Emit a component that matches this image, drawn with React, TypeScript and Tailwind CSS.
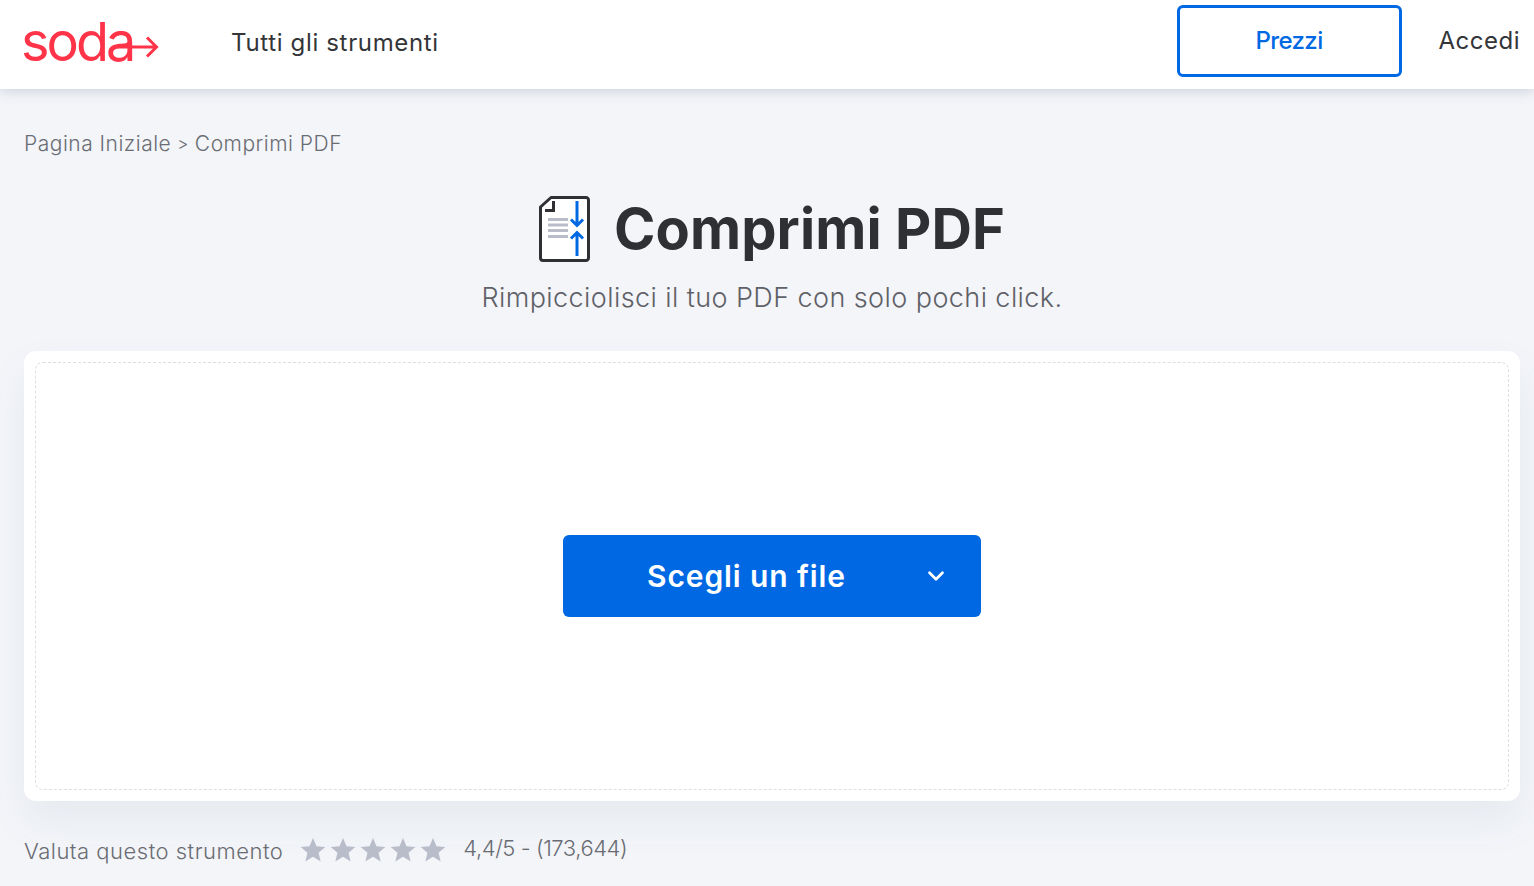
import React from 'react';
import { ChevronDown } from 'lucide-react';

const font = { fontFamily: 'Inter, "Noto Sans", sans-serif' };

const Star = () => (
  <svg viewBox="0 0 24 24" className="h-[26px] w-[26px] fill-[#b9bdc9]">
    <path d="M12 1l3.2 7.6 8.2.6-6.3 5.3 2 8L12 18.2 4.9 22.500l2-8L.6 9.200l8.200-.6z" />
  </svg>
);

const PdfIcon = () => (
  <svg width="52" height="68" viewBox="0 0 52 68" fill="none">
    <path d="M12 2.500h35a2.500 2.500 0 0 1 2.500 2.500v58a2.500 2.500 0 0 1-2.500 2.500H4a2.500 2.500 0 0 1-2.500-2.500V12z" fill="#fff" stroke="#2f3033" strokeWidth="3" strokeLinejoin="round" />
    <path d="M14.500 6v9.500H6" stroke="#2f3033" strokeWidth="3" />
    <path d="M9 23h20v3H9zM9 28.500h20v3H9zM9 34h20v3H9zM9 40h20v3H9z" fill="#b9bdc9" />
    <path d="M38 6v25M32 24.500l6 6 6-6M38 61V37M32 43.500l6-6 6 6" stroke="#0068e3" strokeWidth="3" />
  </svg>
);

export default function App() {
  return (
    <div style={font} className="relative h-[886px] overflow-hidden bg-[#f3f5f9]">
      <header className="flex h-[89px] items-center justify-between bg-white pl-6 pr-[14px] shadow-[0_2px_12px_rgba(90,100,130,0.25)]">
        <div className="flex items-center">
          <div className="relative flex h-[60px] w-[136px] items-center pb-[6px]">
            <span className="-ml-[3px] text-[54px] font-normal leading-none tracking-[-3px] text-[#ff3448]">soda</span>
            <svg className="absolute left-[93px] top-[20px]" width="42" height="24" viewBox="0 0 42 24" fill="none">
              <path d="M0 12h39M30 2.500l9.500 9.500-9.500 9.500" stroke="#ff3448" strokeWidth="3" />
            </svg>
          </div>
          <span className="ml-[71px] pb-[3px] text-[24px] text-[#333538] tracking-[0.660px]">Tutti gli strumenti</span>
        </div>
        <div className="flex items-center pb-[7px]">
          <button className="h-[72px] w-[225px] rounded-md border-[3px] border-[#0068e3] text-[24px] font-medium tracking-[-0.600px] text-[#0068e3]">
            Prezzi
          </button>
          <span className="ml-[37px] text-[24px] text-[#333538] tracking-[0.500px]">Accedi</span>
        </div>
      </header>

      <main className="pl-6 pr-[14px]">
        <nav className="mt-[40px] flex items-center text-[21px] font-light leading-[30px] tracking-[0.500px] text-[#6a6c73]">
          <span>Pagina Iniziale</span>
          <span className="mx-[6px] text-[17px]">&gt;</span>
          <span>Comprimi PDF</span>
        </nav>

        <div className="mt-[36px] flex items-center justify-center">
          <PdfIcon />
          <h1 className="ml-[23px] text-[56px] font-bold leading-[68px] tracking-[0.100px] text-[#2f3033]">Comprimi PDF</h1>
        </div>
        <p className="mt-[15px] text-center text-[27px] leading-[40px] font-light tracking-[0.420px] text-[#5f6167]">
          Rimpicciolisci il tuo PDF con solo pochi click.
        </p>

        <section className="mt-[33px] h-[450px] rounded-xl bg-white p-[11px] shadow-[0_20px_40px_rgba(90,100,130,0.08)]">
          <div className="flex h-full items-center justify-center rounded-lg border border-dashed border-[#dcdee3]">
            <button className="relative flex h-[82px] w-[418px] items-center rounded-md bg-[#0068e3] pl-[84px] text-[30px] font-semibold tracking-[0.900px] text-white">
              Scegli un file
              <ChevronDown className="absolute right-[32px] top-[28px] h-[26px] w-[26px]" strokeWidth={2.500} />
            </button>
          </div>
        </section>

        <div className="mt-[31px] flex items-center text-[#6a6c73]">
          <span className="pt-[3px] text-[22px] font-light tracking-[0.500px]">Valuta questo strumento</span>
          <div className="ml-[17px] flex gap-[4px]">
            <Star /><Star /><Star /><Star /><Star />
          </div>
          <span className="ml-[17px] pb-[3px] text-[22px] font-light tracking-[-0.450px]">4,4/5 - (173,644)</span>
        </div>
      </main>
    </div>
  );
}
